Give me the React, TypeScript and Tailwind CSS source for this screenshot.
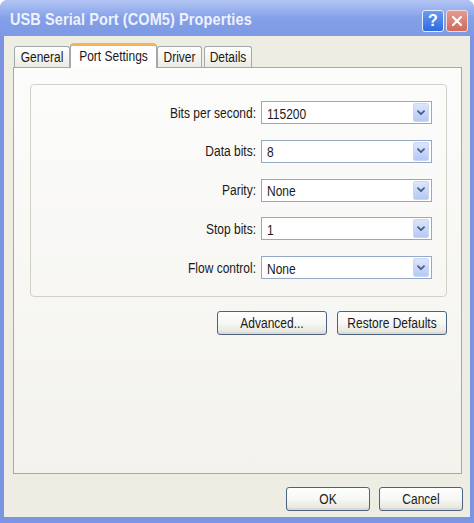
import type { ReactNode } from "react";

type PortSetting = {
  label: string;
  value: string;
};

const portSettings: PortSetting[] = [
  { label: "Bits per second:", value: "115200" },
  { label: "Data bits:", value: "8" },
  { label: "Parity:", value: "None" },
  { label: "Stop bits:", value: "1" },
  { label: "Flow control:", value: "None" },
];

// Tahoma-ish look: narrow glyphs stretched a little taller
function Txt({ children }: { children: ReactNode }) {
  return (
    <span className="inline-block scale-y-[1.22] text-[12px] leading-none text-[#1a1a1a]">
      {children}
    </span>
  );
}

function XpButton({ label, width }: { label: string; width: string }) {
  return (
    <button
      type="button"
      className={`flex h-[24px] ${width} items-center justify-center rounded-[3px] border border-[#4b6280] bg-gradient-to-b from-white via-[#f7f7f4] to-[#e4e2da] shadow-[inset_0_-2px_0_#dcd9cf]`}
    >
      <Txt>{label}</Txt>
    </button>
  );
}

function Combo({ value }: { value: string }) {
  return (
    <div className="flex h-[23px] w-[171px] items-center border border-[#94a9c6] bg-white pl-[5px] pr-[2px]">
      <span className="flex-1">
        <Txt>{value}</Txt>
      </span>
      <span className="flex h-[19px] w-[16px] items-center justify-center rounded-[2px] border border-[#c9d6f4] bg-gradient-to-b from-[#dbe6fd] to-[#b6c9f4]">
        <svg viewBox="0 0 8 6" className="h-[6px] w-[8px]">
          <path
            d="M1 1.2 4 4.2 7 1.2"
            fill="none"
            stroke="#4a5d86"
            strokeWidth="1.8"
            strokeLinecap="round"
            strokeLinejoin="round"
          />
        </svg>
      </span>
    </div>
  );
}

function Tab({
  label,
  width,
  active = false,
}: {
  label: string;
  width: string;
  active?: boolean;
}) {
  return active ? (
    <div
      className={`relative z-10 -mb-px flex h-[25px] ${width} items-center justify-center rounded-t-[4px] border border-b-0 border-t-[3px] border-[#a3a9ab] border-t-[#f2b552] bg-white pb-[3px]`}
    >
      <Txt>{label}</Txt>
    </div>
  ) : (
    <div
      className={`flex h-[21px] ${width} items-center justify-center rounded-t-[3px] border border-b-0 border-[#a3a9ab] bg-gradient-to-b from-white to-[#ebeae3]`}
    >
      <Txt>{label}</Txt>
    </div>
  );
}

export default function App() {
  return (
    <div className="flex h-[523px] w-[474px] flex-col overflow-hidden rounded-t-[8px] bg-[#7b95e2] font-['Liberation_Sans',Arial,sans-serif]">
      {/* title bar */}
      <div className="flex h-[36px] shrink-0 items-center justify-between bg-gradient-to-b from-[#b3c5f4] via-[#84a0e8] to-[#7d99e4] pl-[10px] pr-[6px] pt-[5px]">
        <span className="inline-block scale-y-[1.12] text-[14.5px] font-bold tracking-[0.1px] text-[#eef2fc]">
          USB Serial Port (COM5) Properties
        </span>
        <div className="flex gap-[2px]">
          <span className="flex h-[22px] w-[22px] items-center justify-center rounded-[3px] border border-[#e6edfb] bg-gradient-to-b from-[#6a9af0] to-[#2f69de] text-[16px] font-bold leading-none text-white">
            ?
          </span>
          <span className="flex h-[22px] w-[22px] items-center justify-center rounded-[3px] border border-[#f3dcd8] bg-gradient-to-b from-[#e59a8e] to-[#cf6a5c]">
            <svg viewBox="0 0 12 12" className="h-[12px] w-[12px]">
              <path
                d="M2 2 10 10M10 2 2 10"
                stroke="white"
                strokeWidth="2.2"
                strokeLinecap="round"
              />
            </svg>
          </span>
        </div>
      </div>

      {/* dialog body */}
      <div className="mx-[4px] mb-[6px] flex flex-1 flex-col bg-[#eeede4] pl-[9px] pr-[8px]">
        <div className="mt-[7px] flex h-[24px] items-end pl-[1px]">
          <Tab label="General" width="w-[56px]" />
          <Tab label="Port Settings" width="w-[87px]" active />
          <Tab label="Driver" width="w-[45px]" />
          <div className="ml-[2px]">
            <Tab label="Details" width="w-[48px]" />
          </div>
        </div>

        <div className="flex h-[407px] flex-col border border-[#a3a9ab] bg-gradient-to-b from-[#fcfcfb] to-[#f3f2ed] pl-[16px] pr-[14px] pt-[16px]">
          <div className="flex flex-col gap-[15.75px] rounded-[4px] border border-[#d3d1c6] pb-[17px] pr-[14px] pt-[16px]">
            {portSettings.map((setting) => (
              <div
                key={setting.label}
                className="flex items-center justify-end gap-[5px]"
              >
                <Txt>{setting.label}</Txt>
                <Combo value={setting.value} />
              </div>
            ))}
          </div>

          <div className="mt-[14px] flex justify-end gap-[10px]">
            <XpButton label="Advanced..." width="w-[110px]" />
            <XpButton label="Restore Defaults" width="w-[110px]" />
          </div>
        </div>

        <div className="-mr-px mt-[13px] flex justify-end gap-[9px]">
          <XpButton label="OK" width="w-[84px]" />
          <XpButton label="Cancel" width="w-[84px]" />
        </div>
      </div>
    </div>
  );
}
